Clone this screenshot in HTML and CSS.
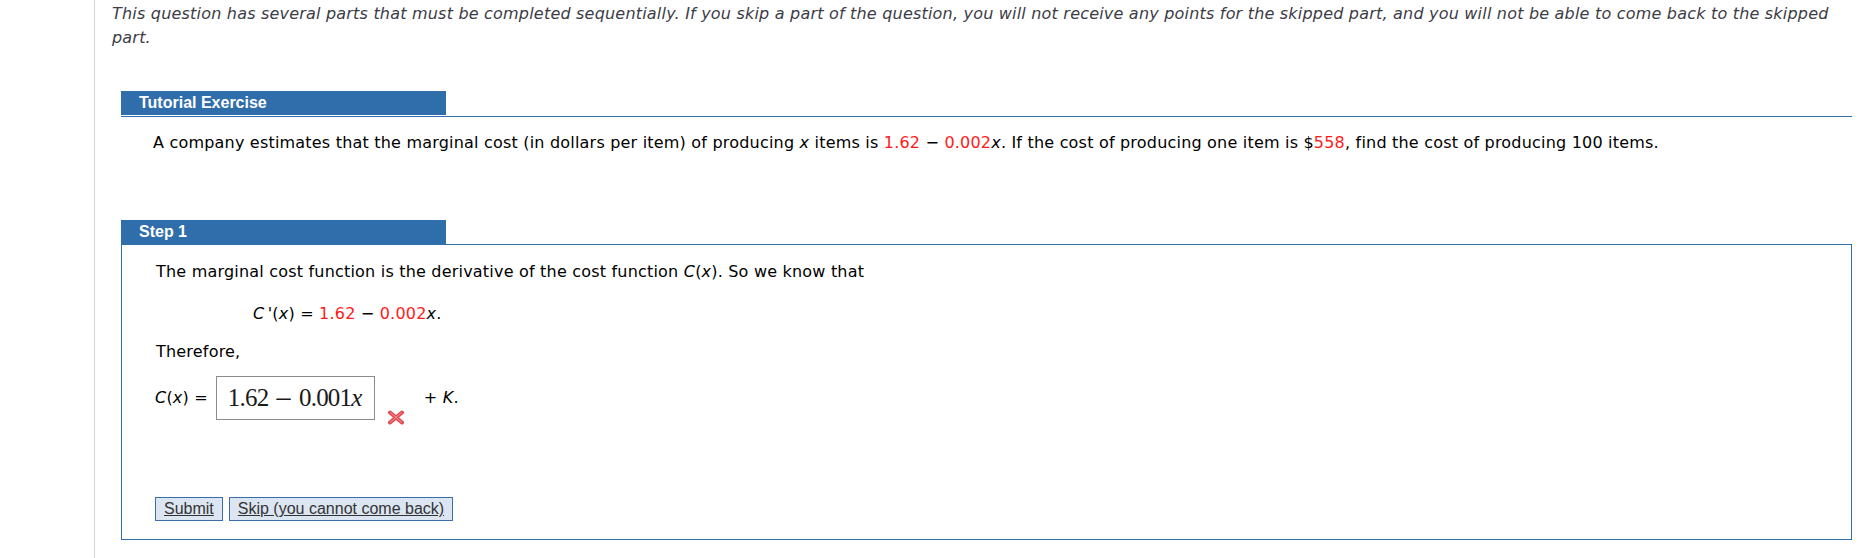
FILE: index.html
```html
<!DOCTYPE html>
<html lang="en">
<head>
<meta charset="utf-8">
<title>Tutorial Exercise</title>
<link rel="stylesheet" href="styles.css">
</head>
<body>
<div class="page">
  <div class="gutter"></div>
  <main class="content">
    <p class="intro">This question has several parts that must be completed sequentially. If you skip a part of the question, you will not receive any points for the skipped part, and you will not be able to come back to the skipped part.</p>

    <section class="tutorial">
      <div class="sec-head"><div class="sec-title">Tutorial Exercise</div></div>
      <p class="problem">A company estimates that the marginal cost (in dollars per item) of producing <i>x</i> items is <span class="red">1.62</span> &minus; <span class="red">0.002</span><i>x</i>. If the cost of producing one item is $<span class="red">558</span>, find the cost of producing 100 items.</p>
    </section>

    <section class="step">
      <div class="step-title">Step 1</div>
      <div class="step-box">
        <p class="line first">The marginal cost function is the derivative of the cost function <i>C</i>(<i>x</i>). So we know that</p>
        <p class="line eq"><i>C</i>&thinsp;'(<i>x</i>) = <span class="red">1.62</span> &minus; <span class="red">0.002</span><i>x</i>.</p>
        <p class="line last">Therefore,</p>
        <div class="answer-row">
          <span class="label"><i>C</i>(<i>x</i>) =</span>
          <span class="answer">1.62<span class="op">&minus;</span>0.001<i>x</i></span>
          <span class="mark">
            <svg class="xicon" width="18" height="15" viewBox="0 0 18 15">
              <path d="M3 2.5 L15 12.5 M15 2.5 L3 12.5" stroke="#e14b52" stroke-width="4" stroke-linecap="round" fill="none"/>
              <path d="M3.6 2.8 L14.4 11.9 M14.4 2.8 L3.6 11.9" stroke="#f3858a" stroke-width="1.1" stroke-linecap="round" fill="none"/>
            </svg>
          </span>
          <span class="plus">+ <i>K</i>.</span>
        </div>
        <div class="buttons">
          <button class="btn" type="button">Submit</button>
          <button class="btn" type="button">Skip (you cannot come back)</button>
        </div>
      </div>
    </section>
  </main>
</div>
</body>
</html>
```

FILE: styles.css
```css
html, body {
  margin: 0;
  padding: 0;
  background: #ffffff;
}

body {
  font-family: "DejaVu Sans", Verdana, sans-serif;
  font-size: 16px;
  letter-spacing: 0.2px;
  color: #000000;
}

.page {
  display: flex;
  min-height: 558px;
}

.gutter {
  flex: none;
  width: 94px;
  border-right: 1px solid #d4d4d4;
}

.content {
  flex: 1;
  min-width: 0;
  padding: 0 23px 0 17px;
}

.intro {
  margin: 0;
  padding-top: 2px;
  font-style: italic;
  line-height: 24px;
  color: #3c3c46;
}

.red {
  color: #ff1a1a;
}

.tutorial {
  margin: 41px 0 0 9px;
}

.sec-head {
  border-bottom: 1px solid #2f6dab;
}

.sec-title,
.step-title {
  width: 307px;
  height: 24px;
  padding-left: 18px;
  background: #2f6eab;
  color: #ffffff;
  font-family: "Liberation Sans", Arial, sans-serif;
  font-weight: bold;
  font-size: 16px;
  letter-spacing: 0;
  line-height: 24px;
}

.sec-title {
  margin-bottom: 1px;
}

.problem {
  margin: 14px 0 0 0;
  padding-left: 32px;
  line-height: 24px;
}

.step {
  margin: 65px 0 0 9px;
}

.step-box {
  border: 1px solid #2f6dab;
  padding: 15px 0 18px 34px;
}

.line {
  margin: 0 0 16px 0;
  line-height: 24px;
}

.line.first {
  margin-bottom: 18px;
}

.eq {
  margin-left: 97px;
  margin-bottom: 14px;
}

.line.last {
  margin-bottom: 0;
}

.answer-row {
  display: flex;
  align-items: center;
  height: 44px;
  margin-top: 12px;
  margin-left: -1px;
  line-height: 24px;
}

.label {
  margin-right: 8px;
}

.answer {
  box-sizing: border-box;
  width: 159px;
  height: 44px;
  border: 1px solid #8c8c8c;
  padding-left: 11px;
  font-family: "Liberation Serif", "DejaVu Serif", serif;
  font-size: 25px;
  letter-spacing: -0.8px;
  line-height: 42px;
  color: #1a1a1a;
  white-space: nowrap;
}

.answer .op {
  display: inline-block;
  margin: 0 6px 0 7px;
  font-family: "DejaVu Serif", serif;
  font-size: 21px;
  letter-spacing: 0;
  transform: scaleX(1.1);
}

.mark {
  align-self: flex-end;
  width: 49px;
  height: 15px;
  margin-bottom: -5px;
  padding-left: 12px;
  box-sizing: border-box;
}

.xicon {
  display: block;
}

.buttons {
  display: flex;
  gap: 6px;
  margin-top: 77px;
  margin-left: -1px;
}

.btn {
  box-sizing: border-box;
  height: 24px;
  padding: 0 8px;
  border: 1px solid #3b6ea6;
  border-radius: 0;
  background: #dce6f2;
  color: #333333;
  font-family: "Liberation Sans", Arial, sans-serif;
  font-size: 16px;
  letter-spacing: 0;
  line-height: 22px;
  text-decoration: underline;
  cursor: pointer;
}
```
